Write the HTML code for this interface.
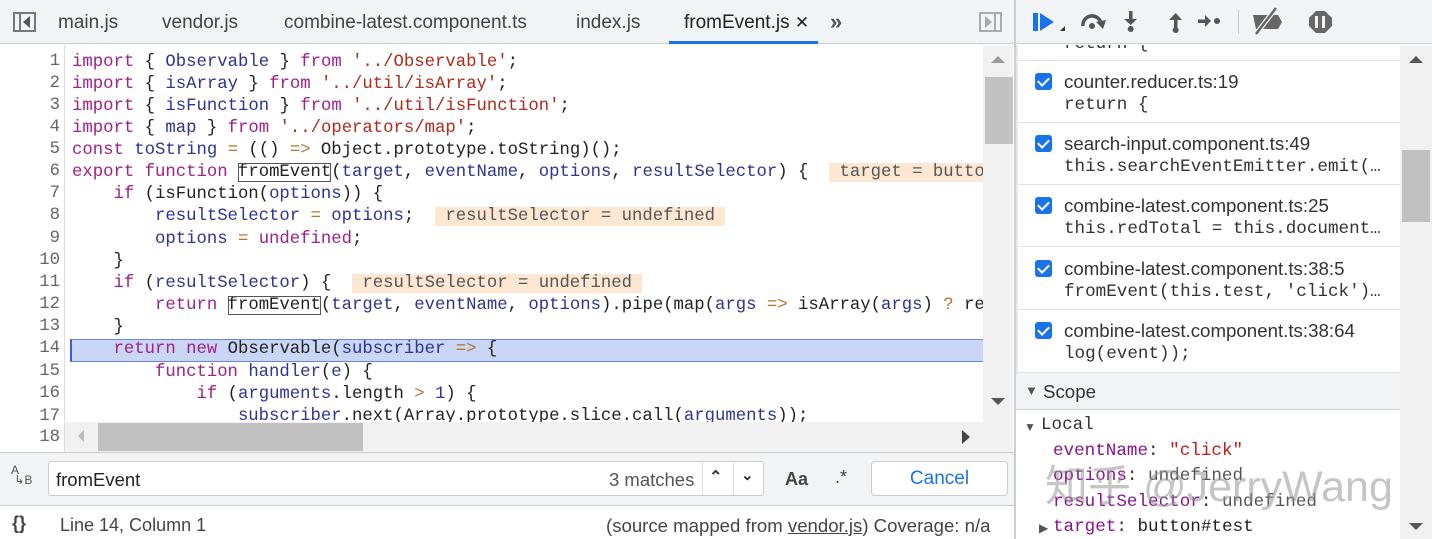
<!DOCTYPE html>
<html><head><meta charset="utf-8">
<style>
*{margin:0;padding:0;box-sizing:border-box}
body{width:1432px;height:539px;overflow:hidden;background:#fff;font-family:"Liberation Sans",sans-serif;color:#333;position:relative}
.abs{position:absolute}
.tabs{left:0;top:0;width:1014px;height:44px;background:#f1f3f4;border-bottom:1px solid #cacdd1;font-size:19px;color:#444}
.tab{position:absolute;top:12px}
.code{font-family:"Liberation Mono",monospace;font-size:17.3px;white-space:pre;color:#222}
.ln{position:absolute;left:0;width:60px;text-align:right;font-family:"Liberation Mono",monospace;font-size:17.3px;color:#666}
.k{color:#a0208c}.v{color:#2d3493}.s{color:#b22a1c}.o{color:#b8722a}
.inl{background:#fde6d2;color:#555}
.box{outline:1px solid #555;outline-offset:-1px}
.cl{position:absolute;left:72px;height:22px;line-height:22px}
.item{position:absolute;left:1017px;width:383px;height:62px;border-bottom:1px solid #e2e2e2}
.cb{position:absolute;left:18px;top:12px;width:17px;height:17px;background:#1a73e8;border-radius:3px}
.cb:after{content:"";position:absolute;left:5px;top:2px;width:5px;height:9px;border:solid #fff;border-width:0 2.5px 2.5px 0;transform:rotate(45deg)}
.it1{position:absolute;left:47px;top:10px;font-size:18.7px;color:#333}
.it2{position:absolute;left:47px;top:34px;font-family:"Liberation Mono",monospace;font-size:17.6px;color:#333;white-space:pre}
.sc{font-family:"Liberation Mono",monospace;font-size:17.6px;white-space:pre;position:absolute}
</style></head><body>

<div class="abs tabs">
  <div class="abs" style="left:13px;top:12px;width:23px;height:20px;border:2px solid #777"></div>
  <div class="abs" style="left:19px;top:12px;width:2px;height:20px;background:#777"></div>
  <div class="abs" style="left:23px;top:16px;width:0;height:0;border-top:6px solid transparent;border-bottom:6px solid transparent;border-right:7px solid #555"></div>
  <div class="tab" style="left:58px">main.js</div>
  <div class="tab" style="left:162px">vendor.js</div>
  <div class="tab" style="left:284px">combine-latest.component.ts</div>
  <div class="tab" style="left:576px">index.js</div>
  <div class="tab" style="left:684px;color:#222">fromEvent.js <span style="font-size:17px">✕</span></div>
  <div class="abs" style="left:669px;top:41px;width:149px;height:3px;background:#1a73e8"></div>
  <div class="tab" style="left:830px;top:9px;font-size:22px;font-weight:bold;color:#555">»</div>
  <div class="abs" style="left:979px;top:12px;width:23px;height:20px;border:2px solid #aaa"></div>
  <div class="abs" style="left:994px;top:12px;width:2px;height:20px;background:#aaa"></div>
  <div class="abs" style="left:985px;top:16px;width:0;height:0;border-top:6px solid transparent;border-bottom:6px solid transparent;border-left:7px solid #aaa"></div>
</div>
<div class="abs" style="left:1014px;top:0;width:2px;height:539px;background:#cacdd1"></div>

<div class="abs" style="left:64px;top:45px;width:1px;height:408px;background:#ddd"></div>
<div class="abs" style="left:70px;top:339px;width:913px;height:23px;background:#c9d6f5;border-top:1px solid #6b85d8;border-bottom:1px solid #6b85d8;border-left:2px solid #3b5fd0"></div>

<div class="code">
<div class="ln" style="top:52px">1</div><div class="cl" style="top:52px"><span class="k">import</span> { <span class="v">Observable</span> } <span class="k">from</span> <span class="s">'../Observable'</span>;</div>
<div class="ln" style="top:74px">2</div><div class="cl" style="top:74px"><span class="k">import</span> { <span class="v">isArray</span> } <span class="k">from</span> <span class="s">'../util/isArray'</span>;</div>
<div class="ln" style="top:96px">3</div><div class="cl" style="top:96px"><span class="k">import</span> { <span class="v">isFunction</span> } <span class="k">from</span> <span class="s">'../util/isFunction'</span>;</div>
<div class="ln" style="top:118px">4</div><div class="cl" style="top:118px"><span class="k">import</span> { <span class="v">map</span> } <span class="k">from</span> <span class="s">'../operators/map'</span>;</div>
<div class="ln" style="top:140px">5</div><div class="cl" style="top:140px"><span class="k">const</span> <span class="v">toString</span> <span class="o">=</span> (() <span class="o">=&gt;</span> Object.prototype.toString)();</div>
<div class="ln" style="top:162px">6</div><div class="cl" style="top:162px"><span class="k">export</span> <span class="k">function</span> <span class="box">fromEvent</span>(<span class="v">target</span>, <span class="v">eventName</span>, <span class="v">options</span>, <span class="v">resultSelector</span>) {  <span class="inl"> target = butto</span></div>
<div class="ln" style="top:184px">7</div><div class="cl" style="top:184px">    <span class="k">if</span> (isFunction(<span class="v">options</span>)) {</div>
<div class="ln" style="top:206px">8</div><div class="cl" style="top:206px">        <span class="v">resultSelector</span> <span class="o">=</span> <span class="v">options</span>;  <span class="inl"> resultSelector = undefined </span></div>
<div class="ln" style="top:229px">9</div><div class="cl" style="top:229px">        <span class="v">options</span> <span class="o">=</span> <span class="k">undefined</span>;</div>
<div class="ln" style="top:251px">10</div><div class="cl" style="top:251px">    }</div>
<div class="ln" style="top:273px">11</div><div class="cl" style="top:273px">    <span class="k">if</span> (<span class="v">resultSelector</span>) {  <span class="inl"> resultSelector = undefined </span></div>
<div class="ln" style="top:295px">12</div><div class="cl" style="top:295px">        <span class="k">return</span> <span class="box">fromEvent</span>(<span class="v">target</span>, <span class="v">eventName</span>, <span class="v">options</span>).pipe(map(<span class="v">args</span> <span class="o">=&gt;</span> isArray(<span class="v">args</span>) <span class="o">?</span> re</div>
<div class="ln" style="top:317px">13</div><div class="cl" style="top:317px">    }</div>
<div class="ln" style="top:339px">14</div><div class="cl" style="top:339px">    <span class="k">return</span> <span class="k">new</span> Observable(<span class="v">subscriber</span> <span class="o">=&gt;</span> {</div>
<div class="ln" style="top:362px">15</div><div class="cl" style="top:362px">        <span class="k">function</span> <span class="v">handler</span>(<span class="v">e</span>) {</div>
<div class="ln" style="top:384px">16</div><div class="cl" style="top:384px">            <span class="k">if</span> (<span class="v">arguments</span>.length <span class="o">&gt;</span> <span class="v">1</span>) {</div>
<div class="ln" style="top:428px">18</div>
</div>
<div class="abs code" style="left:72px;top:406px;height:16px;overflow:hidden;line-height:22px">                <span class="v">subscriber</span>.next(Array.prototype.slice.call(<span class="v">arguments</span>));</div>
<div class="ln abs" style="top:406px;height:16px;overflow:hidden;line-height:22px">17</div>

<div class="abs" style="left:65px;top:422px;width:918px;height:30px;background:#f1f1f1"></div>
<div class="abs" style="left:98px;top:423px;width:265px;height:28px;background:#c1c1c1"></div>
<div class="abs" style="left:78px;top:430px;border-top:6px solid transparent;border-bottom:6px solid transparent;border-right:6px solid #bbb"></div>
<div class="abs" style="left:962px;top:430px;border-top:7px solid transparent;border-bottom:7px solid transparent;border-left:8px solid #444"></div>
<div class="abs" style="left:983px;top:45px;width:30px;height:407px;background:#f1f1f1"></div>
<div class="abs" style="left:985px;top:77px;width:28px;height:67px;background:#c1c1c1"></div>
<div class="abs" style="left:991px;top:56px;border-left:7px solid transparent;border-right:7px solid transparent;border-bottom:7px solid #999"></div>
<div class="abs" style="left:991px;top:398px;border-left:7px solid transparent;border-right:7px solid transparent;border-top:7px solid #555"></div>

<div class="abs" style="left:0;top:452px;width:1014px;height:54px;background:#f1f3f4;border-top:1px solid #ccc;border-bottom:1px solid #ccc"></div>
<div class="abs" style="left:11px;top:465px;font-size:12px;color:#555;line-height:10px">A<br>&nbsp;↳B</div>
<div class="abs" style="left:48px;top:461px;width:716px;height:35px;background:#fff;border:1px solid #ccc;border-radius:3px"></div>
<div class="abs" style="left:56px;top:469px;font-size:18.5px;color:#222">fromEvent</div>
<div class="abs" style="left:609px;top:469px;font-size:18.5px;color:#555">3 matches</div>
<div class="abs" style="left:702px;top:462px;width:1px;height:33px;background:#ddd"></div>
<div class="abs" style="left:733px;top:462px;width:1px;height:33px;background:#ddd"></div>
<div class="abs" style="left:709px;top:467px;font-size:16px;font-weight:bold;color:#333">⌃</div>
<div class="abs" style="left:741px;top:466px;font-size:15px;font-weight:bold;color:#333">⌄</div>
<div class="abs" style="left:785px;top:469px;font-size:18px;font-weight:bold;color:#444">Aa</div>
<div class="abs" style="left:835px;top:467px;font-size:18px;color:#444">.*</div>
<div class="abs" style="left:871px;top:461px;width:137px;height:35px;background:#fff;border:1px solid #ccc;border-radius:4px;text-align:center;line-height:33px;font-size:19px;color:#1a73e8">Cancel</div>

<div class="abs" style="left:12px;top:513px;font-size:18px;color:#444;font-weight:bold">{}</div>
<div class="abs" style="left:60px;top:515px;font-size:18px;color:#444">Line 14, Column 1</div>
<div class="abs" style="left:606px;top:515px;font-size:18.6px;color:#444;white-space:nowrap">(source mapped from <u>vendor.js</u>) Coverage: n/a</div>

<div class="abs" style="left:1016px;top:0;width:416px;height:44px;background:#f1f3f4;border-bottom:1px solid #cacdd1"></div>
<svg class="abs" style="left:1016px;top:0" width="416" height="44">
 <rect x="17" y="13" width="5" height="18" fill="#1a73e8"/><path d="M24 13 L38 22 L24 31Z" fill="#1a73e8"/><path d="M44 31 L49 31 L49 26Z" fill="#333"/>
 <path d="M67 26 A9 9 0 0 1 85 24" stroke="#555" stroke-width="3.5" fill="none"/><path d="M80 22 L90 20 L87 29Z" fill="#555"/><circle cx="76" cy="26" r="3" fill="#555"/>
 <rect x="113" y="11" width="3.5" height="10" fill="#555"/><path d="M108 19 L121 19 L114.7 25Z" fill="#555"/><circle cx="114.7" cy="29" r="3" fill="#555"/>
 <rect x="158" y="18" width="3.5" height="10" fill="#555"/><path d="M153 20 L166 20 L159.7 13Z" fill="#555"/><circle cx="159.7" cy="30" r="3" fill="#555"/>
 <rect x="182" y="19.5" width="8" height="3.5" fill="#555"/><path d="M189 15 L195 21 L189 27Z" fill="#555"/><circle cx="201" cy="21" r="3" fill="#555"/>
 <rect x="222" y="10" width="1" height="24" fill="#ccc"/>
 <path d="M237 15 L262 15 L266 22 L262 29 L240 29Z" fill="#666"/><path d="M240 34 L260 8" stroke="#f1f3f4" stroke-width="5"/><path d="M240 34 L260 8" stroke="#666" stroke-width="2.5"/>
 <path d="M300 11 L309 11 L316 18 L316 26 L309 33 L300 33 L293 26 L293 18Z" fill="#666"/><rect x="299" y="16" width="3" height="12" fill="#f1f3f4"/><rect x="306" y="16" width="3" height="12" fill="#f1f3f4"/>
</svg>

<div class="abs" style="left:1017px;top:45px;width:383px;height:16px;overflow:hidden;border-bottom:1px solid #e2e2e2"><div class="it2" style="top:-11px">return {</div></div>
<div class="item" style="top:61px"><div class="cb"></div><div class="it1">counter.reducer.ts:19</div><div class="it2">return {</div></div>
<div class="item" style="top:123px"><div class="cb"></div><div class="it1">search-input.component.ts:49</div><div class="it2">this.searchEventEmitter.emit(…</div></div>
<div class="item" style="top:185px"><div class="cb"></div><div class="it1">combine-latest.component.ts:25</div><div class="it2">this.redTotal = this.document…</div></div>
<div class="item" style="top:248px"><div class="cb"></div><div class="it1">combine-latest.component.ts:38:5</div><div class="it2">fromEvent(this.test, 'click')…</div></div>
<div class="item" style="top:310px;height:63px"><div class="cb"></div><div class="it1">combine-latest.component.ts:38:64</div><div class="it2">log(event));</div></div>

<div class="abs" style="left:1016px;top:373px;width:384px;height:37px;background:#f1f3f4;border-bottom:1px solid #ccc"></div>
<div class="abs" style="left:1025px;top:383px;font-size:13px;color:#555">▼</div>
<div class="abs" style="left:1043px;top:381px;font-size:18.7px;color:#333">Scope</div>
<div class="abs" style="left:1024px;top:420px;font-size:12px;color:#555">▼</div>
<div class="sc" style="left:1041px;top:415px;color:#333">Local</div>
<div class="sc" style="left:1053px;top:441px"><span style="color:#881391">eventName</span>: <span style="color:#c41a16">"click"</span></div>
<div class="sc" style="left:1053px;top:466px"><span style="color:#881391">options</span>: <span style="color:#555">undefined</span></div>
<div class="sc" style="left:1053px;top:492px"><span style="color:#881391">resultSelector</span>: <span style="color:#555">undefined</span></div>
<div class="abs" style="left:1039px;top:521px;font-size:12px;color:#555">▶</div>
<div class="sc" style="left:1053px;top:517px"><span style="color:#881391">target</span>: <span style="color:#222">button#test</span></div>
<div class="abs" style="left:1045px;top:452px;font-size:43px;color:rgba(150,150,150,0.55);font-family:'Liberation Sans','Noto Sans CJK SC',sans-serif;white-space:nowrap">知乎 @JerryWang</div>

<div class="abs" style="left:1400px;top:45px;width:32px;height:494px;background:#f1f1f1"></div>
<div class="abs" style="left:1402px;top:150px;width:28px;height:72px;background:#c1c1c1"></div>
<div class="abs" style="left:1409px;top:56px;border-left:7px solid transparent;border-right:7px solid transparent;border-bottom:7px solid #555"></div>
<div class="abs" style="left:1409px;top:523px;border-left:7px solid transparent;border-right:7px solid transparent;border-top:7px solid #555"></div>
<div class="abs" style="left:1016px;top:45px;width:2px;height:330px;background:#e8e8e8"></div>
</body></html>
